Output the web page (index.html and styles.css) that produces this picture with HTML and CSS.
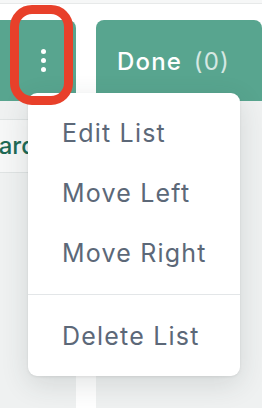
FILE: index.html
```html
<!DOCTYPE html>
<html lang="en">
<head>
    <meta charset="UTF-8">
    <meta name="viewport" content="width=device-width, initial-scale=1.0">
    <title>Board</title>
    <link rel="stylesheet" href="styles.css">
</head>
<body>
    <div class="topbar"></div>
    <div class="board">
        <div class="column">
            <div class="list-header">
                <span class="list-title">Doing <span class="count">(2)</span></span>
                <button class="kebab" aria-label="List menu">
                    <span></span><span></span><span></span>
                </button>
                <div class="highlight"></div>
                <div class="menu">
                    <div class="menu-item">Edit List</div>
                    <div class="menu-item">Move Left</div>
                    <div class="menu-item">Move Right</div>
                    <div class="divider"></div>
                    <div class="menu-item">Delete List</div>
                </div>
            </div>
            <div class="list-body">
                <div class="card">Add a card</div>
            </div>
        </div>
        <div class="column column-last">
            <div class="list-header">
                <span class="list-title">Done <span class="count">(0)</span></span>
            </div>
            <div class="list-body"></div>
        </div>
    </div>
</body>
</html>
```

FILE: styles.css
```css
body {
    margin: 0;
    background: #fff;
    font-family: 'Inter', 'Liberation Sans', sans-serif;
    overflow: hidden;
    height: 408px;
}
.topbar {
    height: 3px;
    background: #f6f7f7;
    border-bottom: 1px solid #e7e9e9;
}
.board {
    display: flex;
    gap: 20px;
    padding-top: 16px;
    margin-left: -184px;
}
.column {
    width: 260px;
    flex-shrink: 0;
}
.column-last {
    flex: 1;
}
.list-header {
    position: relative;
    height: 81px;
    background: #58a58f;
    border-radius: 8px 8px 0 0;
    display: flex;
    align-items: center;
    justify-content: space-between;
    padding: 0 21px;
    color: #fff;
}
.list-title {
    font-size: 24px;
    font-weight: 500;
    letter-spacing: 1.2px;
    margin-top: 2px;
}
.count {
    font-weight: 400;
    opacity: 0.75;
    margin-left: 4px;
}
.kebab {
    width: 22px;
    height: 30px;
    margin-right: 1px;
    padding: 0;
    border: none;
    background: none;
    display: flex;
    flex-direction: column;
    align-items: center;
    justify-content: center;
    gap: 4px;
}
.kebab span {
    width: 5px;
    height: 5px;
    border-radius: 50%;
    background: #fff;
}
.highlight {
    position: absolute;
    left: 194px;
    top: -15px;
    width: 45px;
    height: 82px;
    border: 9px solid #e8402a;
    border-radius: 22px;
    z-index: 3;
}
.menu {
    position: absolute;
    left: 212px;
    top: 73px;
    width: 212px;
    box-sizing: border-box;
    padding: 10px 0;
    background: #fff;
    border-radius: 9px;
    box-shadow: 0 8px 28px rgba(40, 60, 60, 0.14), 0 1px 3px rgba(0, 0, 0, 0.08);
    z-index: 2;
}
.menu-item {
    height: 60px;
    line-height: 60px;
    padding-left: 34px;
    font-size: 25px;
    letter-spacing: 1.2px;
    color: #5c6878;
}
.divider {
    height: 1px;
    margin: 11px 0;
    background: #e3e6e8;
}
.list-body {
    height: 290px;
    background: #eff1f1;
    padding-top: 18px;
}
.card {
    height: 52px;
    line-height: 52px;
    background: #f6f7f7;
    border-top: 1px solid #dfe3e3;
    border-bottom: 1px solid #dfe3e3;
    text-align: right;
    padding-right: 40px;
    font-size: 24px;
    font-weight: 500;
    color: #1e6a55;
    white-space: nowrap;
    overflow: hidden;
}
```
